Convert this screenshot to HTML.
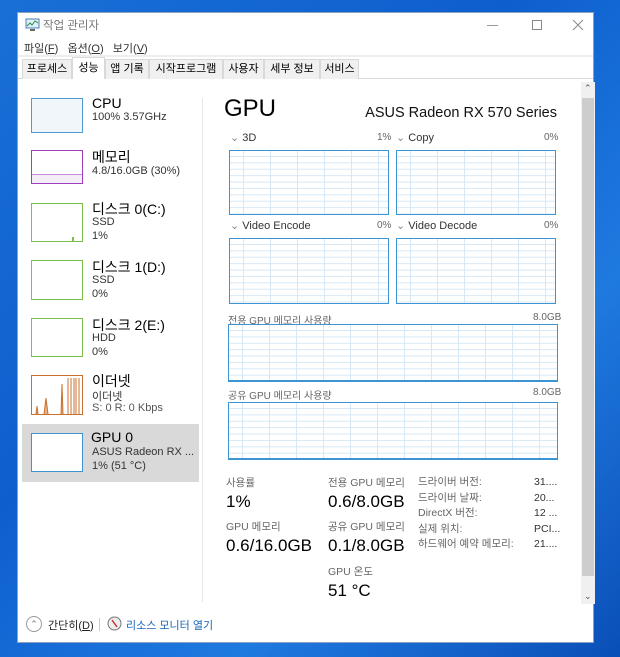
<!DOCTYPE html>
<html><head><meta charset="utf-8">
<style>
*{margin:0;padding:0;box-sizing:border-box}
body{width:620px;height:657px;overflow:hidden;background:linear-gradient(135deg,#1a6fd6 0%,#0e5fce 40%,#1f7ae0 70%,#0a4fb8 100%);font-family:"Liberation Sans","Noto Sans CJK KR",sans-serif;position:relative;color:#000}
.a{position:absolute;white-space:nowrap}
#win{position:absolute;left:17px;top:12px;width:577px;height:631px;background:#fff;border:1px solid #8aa2bf}
.g{position:absolute;border:1px solid #3c94d2;background-color:#fff;
background-image:linear-gradient(#d6e8f6 1px,transparent 1px),linear-gradient(90deg,#d6e8f6 1px,transparent 1px);
background-size:100% 6.4px,27px 100%;background-position:0 5px,13px 0}
.lbl{font-size:11px;color:#333}
.sm{font-size:10px;color:#666}
.thumb{position:absolute;left:13px;width:52px;border:1px solid}
.t1{font-size:14px;color:#000}
.t2{font-size:11px;color:#333}
.tab{position:absolute;top:46px;height:20px;font-size:11px;line-height:19px;text-align:center;border:1px solid #d9d9d9;border-bottom:none;background:#f0f0f0}
.sl{font-size:10.5px;color:#666}
.sv{font-size:17px;color:#000}
</style></head><body>
<div id="win">
  <svg class="a" style="left:7px;top:5px" width="15" height="14" viewBox="0 0 15 14"><rect x="1" y="1" width="13" height="9" fill="#dff0fb" stroke="#4a7fb0"/><polyline points="2,8 5,5 7,7 10,3 13,5" fill="none" stroke="#2a8a3a" stroke-width="1"/><rect x="5" y="11" width="5" height="2" fill="#666"/></svg>
  <div class="a" style="left:25px;top:4px;font-size:11.5px;color:#777">작업 관리자</div>
  <div class="a" style="left:469px;top:12px;width:11px;height:1px;background:#999"></div>
  <div class="a" style="left:514px;top:7px;width:10px;height:10px;border:1px solid #888"></div>
  <svg class="a" style="left:554px;top:6px" width="12" height="12"><path d="M1 1L11 11M11 1L1 11" stroke="#888" stroke-width="1"/></svg>
  <div class="a" style="left:6px;top:27px;font-size:11px;color:#333">파일(<u>F</u>)&nbsp;&nbsp;&nbsp;옵션(<u>O</u>)&nbsp;&nbsp;&nbsp;보기(<u>V</u>)</div>
  <div class="a" style="left:0;top:42px;width:575px;height:2px;background:#eee"></div>
  <div class="a" style="left:0;top:65px;width:575px;height:1px;background:#d9d9d9"></div>
  <div class="tab" style="left:4px;width:50px">프로세스</div>
  <div class="tab" style="left:54px;width:33px;top:44px;height:22px;background:#fff;line-height:20px">성능</div>
  <div class="tab" style="left:87px;width:44px">앱 기록</div>
  <div class="tab" style="left:131px;width:74px">시작프로그램</div>
  <div class="tab" style="left:205px;width:41px">사용자</div>
  <div class="tab" style="left:246px;width:56px">세부 정보</div>
  <div class="tab" style="left:302px;width:39px">서비스</div>
  <div class="a" style="left:563px;top:69px;width:14px;height:522px;background:#f0f0f0"></div>
  <div class="a" style="left:564px;top:85px;width:12px;height:478px;background:#cdcdcd"></div>
  <div class="a" style="left:566px;top:70px;font-size:9px;color:#555">&#8963;</div>
  <div class="a" style="left:566px;top:578px;font-size:9px;color:#555">&#8964;</div>
  <div class="a" style="left:184px;top:85px;width:1px;height:504px;background:#e6e6e6"></div>
  <div class="thumb" style="top:85px;height:35px;border-color:#4c9bd4;background:#f1f6fb"></div>
  <div class="a t1" style="left:74px;top:82px">CPU</div>
  <div class="a t2" style="left:74px;top:98px">100% 3.57GHz</div>
  <div class="thumb" style="top:137px;height:34px;border-color:#9b3fbf;background:linear-gradient(#fff 0,#fff 23px,#c889db 23px,#c889db 24px,#f4eef6 24px)"></div>
  <div class="a t1" style="left:74px;top:134px">메모리</div>
  <div class="a t2" style="left:74px;top:152px">4.8/16.0GB (30%)</div>
  <div class="thumb" style="top:190px;height:39px;border-color:#7cc04a;background:#fff"><div style="position:absolute;left:40px;bottom:0;width:2px;height:4px;background:#7cc04a"></div></div>
  <div class="a t1" style="left:74px;top:186px">디스크 0(C:)</div>
  <div class="a t2" style="left:74px;top:203px">SSD</div>
  <div class="a t2" style="left:74px;top:217px">1%</div>
  <div class="thumb" style="top:247px;height:40px;border-color:#7cc04a;background:#fff"></div>
  <div class="a t1" style="left:74px;top:244px">디스크 1(D:)</div>
  <div class="a t2" style="left:74px;top:261px">SSD</div>
  <div class="a t2" style="left:74px;top:275px">0%</div>
  <div class="thumb" style="top:305px;height:39px;border-color:#7cc04a;background:#fff"></div>
  <div class="a t1" style="left:74px;top:302px">디스크 2(E:)</div>
  <div class="a t2" style="left:74px;top:319px">HDD</div>
  <div class="a t2" style="left:74px;top:333px">0%</div>
  <div class="thumb" style="top:362px;height:40px;border-color:#c8702c;background:#fff">
    <svg width="50" height="38" style="position:absolute;left:0;top:0"><path d="M4 38 L5 30 L6 38 M12 38 L14 22 L16 38 M29 38 L30 8 L31 38 M36 38 V2 M39 38 V2 M42 38 V2 M44 38 V2 M47 38 V2" stroke="#c8702c" fill="#e4b08a" stroke-width="1"/></svg>
  </div>
  <div class="a t1" style="left:74px;top:358px">이더넷</div>
  <div class="a t2" style="left:74px;top:375px">이더넷</div>
  <div class="a t2" style="left:74px;top:389px;color:#555">S: 0 R: 0 Kbps</div>
  <div class="a" style="left:4px;top:411px;width:177px;height:58px;background:#d9d9d9"></div>
  <div class="thumb" style="top:420px;height:39px;border-color:#3c94d2;background:#fff"></div>
  <div class="a t1" style="left:73px;top:416px">GPU 0</div>
  <div class="a t2" style="left:74px;top:433px">ASUS Radeon RX ...</div>
  <div class="a t2" style="left:74px;top:447px">1% (51 °C)</div>
  <div class="a" style="left:206px;top:82px;font-size:24px">GPU</div>
  <div class="a" style="right:36px;top:92px;font-size:14.5px;color:#111">ASUS Radeon RX 570 Series</div>
  <div class="a lbl" style="left:212px;top:118px"><span style="color:#888">⌄</span> 3D</div>
  <div class="a sm" style="left:359px;top:119px">1%</div>
  <div class="a lbl" style="left:378px;top:118px"><span style="color:#888">⌄</span> Copy</div>
  <div class="a sm" style="left:526px;top:119px">0%</div>
  <div class="g" style="left:211px;top:137px;width:160px;height:65px"></div>
  <div class="g" style="left:378px;top:137px;width:160px;height:65px"></div>
  <div class="a lbl" style="left:212px;top:206px"><span style="color:#888">⌄</span> Video Encode</div>
  <div class="a sm" style="left:359px;top:207px">0%</div>
  <div class="a lbl" style="left:378px;top:206px"><span style="color:#888">⌄</span> Video Decode</div>
  <div class="a sm" style="left:526px;top:207px">0%</div>
  <div class="g" style="left:211px;top:225px;width:160px;height:66px"></div>
  <div class="g" style="left:378px;top:225px;width:160px;height:66px"></div>
  <div class="a sm" style="left:210px;top:299px">전용 GPU 메모리 사용량</div>
  <div class="a sm" style="left:515px;top:299px">8.0GB</div>
  <div class="g" style="left:210px;top:311px;width:330px;height:58px;border-bottom:2px solid #3c94d2"></div>
  <div class="a sm" style="left:210px;top:374px">공유 GPU 메모리 사용량</div>
  <div class="a sm" style="left:515px;top:374px">8.0GB</div>
  <div class="g" style="left:210px;top:389px;width:330px;height:58px;border-bottom:2px solid #3c94d2"></div>
  <div class="a sl" style="left:208px;top:462px">사용률</div>
  <div class="a sv" style="left:208px;top:479px">1%</div>
  <div class="a sl" style="left:208px;top:506px">GPU 메모리</div>
  <div class="a sv" style="left:208px;top:523px">0.6/16.0GB</div>
  <div class="a sl" style="left:310px;top:462px">전용 GPU 메모리</div>
  <div class="a sv" style="left:310px;top:479px">0.6/8.0GB</div>
  <div class="a sl" style="left:310px;top:506px">공유 GPU 메모리</div>
  <div class="a sv" style="left:310px;top:523px">0.1/8.0GB</div>
  <div class="a sl" style="left:310px;top:551px">GPU 온도</div>
  <div class="a sv" style="left:310px;top:568px">51 °C</div>
  <div class="a sl" style="left:400px;top:462px;line-height:15.5px">드라이버 버전:<br>드라이버 날짜:<br>DirectX 버전:<br>실제 위치:<br>하드웨어 예약 메모리:</div>
  <div class="a sl" style="left:516px;top:462px;line-height:15.5px;color:#333">31....<br>20...<br>12 ...<br>PCI...<br>21....</div>
  <div class="a" style="left:8px;top:603px;width:16px;height:16px;border:1px solid #999;border-radius:50%;font-size:9px;color:#777;text-align:center;line-height:14px">&#8963;</div>
  <div class="a" style="left:30px;top:604px;font-size:11px;color:#222">간단히(<u>D</u>)</div>
  <div class="a" style="left:81px;top:605px;width:1px;height:13px;background:#ccc"></div>
  <svg class="a" style="left:89px;top:603px" width="15" height="15" viewBox="0 0 15 15"><circle cx="7.5" cy="7.5" r="6.5" fill="#eee" stroke="#777"/><line x1="5" y1="4" x2="10" y2="11" stroke="#c33" stroke-width="1.5"/></svg>
  <div class="a" style="left:108px;top:604px;font-size:11px;color:#1a65b8">리소스 모니터 열기</div>
</div>
</body></html>
